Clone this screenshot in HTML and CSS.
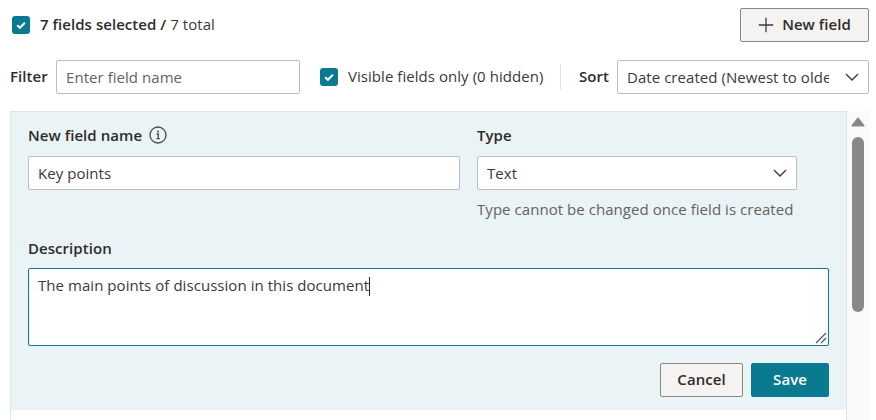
FILE: index.html
```html
<!DOCTYPE html>
<html lang="en">
<head>
<meta charset="utf-8">
<title>Fields</title>
<link rel="stylesheet" href="styles.css">
</head>
<body>
<div class="page">
  <div class="top-row">
    <label class="check-label">
      <span class="check"><svg viewBox="0 0 18 18" width="18" height="18"><path d="M5.2 9.2l2.7 2.6 5-5" fill="none" stroke="#fff" stroke-width="2"/></svg></span>
      <span><b class="strong">7 fields selected /</b> 7 total</span>
    </label>
    <button class="btn btn-new"><svg viewBox="0 0 16 16" width="16" height="16"><path d="M8 .8v14.4M.8 8h14.4" fill="none" stroke="#3c3a38" stroke-width="1.3"/></svg>New field</button>
  </div>
  <div class="filter-row">
    <span class="strong filter-label">Filter</span>
    <input class="field filter-input" placeholder="Enter field name">
    <label class="check-label visible-only">
      <span class="check"><svg viewBox="0 0 18 18" width="18" height="18"><path d="M5.2 9.2l2.7 2.6 5-5" fill="none" stroke="#fff" stroke-width="2"/></svg></span>
      <span>Visible fields only (0 hidden)</span>
    </label>
    <span class="divider"></span>
    <span class="strong sort-label">Sort</span>
    <div class="field select sort-select"><span class="select-text">Date created (Newest to oldest)</span><svg class="chev" viewBox="0 0 14 8" width="14" height="8"><path d="M1 1l6 6 6-6" fill="none" stroke="#3c3a38" stroke-width="1.4"/></svg></div>
  </div>
  <div class="list-area">
    <div class="panel">
      <div class="panel-form">
        <div class="grid-top">
          <div class="col-name">
            <div class="label strong">New field name <svg class="info" viewBox="0 0 18 18" width="18" height="18"><circle cx="9" cy="9" r="8" fill="none" stroke="#4a4a4a" stroke-width="1.3"/><path d="M7.6 8h1.7v4.4M7.4 12.6h3.4" fill="none" stroke="#4a4a4a" stroke-width="1.3"/><circle cx="9" cy="5.4" r="1" fill="#4a4a4a"/></svg></div>
            <input class="field" value="Key points">
          </div>
          <div class="col-type">
            <div class="label strong">Type</div>
            <div class="field select"><span class="select-text">Text</span><svg class="chev" viewBox="0 0 14 8" width="14" height="8"><path d="M1 1l6 6 6-6" fill="none" stroke="#3c3a38" stroke-width="1.4"/></svg></div>
            <div class="hint">Type cannot be changed once field is created</div>
          </div>
        </div>
        <div class="label strong desc-label">Description</div>
        <div class="area">The main points of discussion in this document<span class="caret"></span>
          <svg class="grip" viewBox="0 0 12 12" width="12" height="12"><path d="M1 11L11 1M6 11l5-5" fill="none" stroke="#555" stroke-width="1.2"/></svg>
        </div>
        <div class="actions">
          <button class="btn btn-cancel">Cancel</button>
          <button class="btn btn-save">Save</button>
        </div>
      </div>
    </div>
    <div class="scrollbar">
      <svg class="arrow" viewBox="0 0 14 10" width="14" height="10"><path d="M7 1.5L12.5 8.5H1.5Z" fill="#8a8886" stroke="#8a8886" stroke-width="2" stroke-linejoin="round"/></svg>
      <span class="thumb"></span>
    </div>
  </div>
</div>
</body>
</html>
```
FILE: styles.css
```css
* { box-sizing: border-box; }
html, body { margin: 0; height: 100%; overflow: hidden; background: #fff; }
body { font-family: "Open Sans", sans-serif; font-size: 15px; line-height: 20px; letter-spacing: .05px; color: #3c3a38; }
.page { width: 876px; height: 420px; padding: 8px 7px 0 10px; }
.strong { font-weight: 600; color: #2e2c2a; }
.top-row { display: flex; justify-content: space-between; align-items: center; height: 34px; padding-left: 2px; }
.check-label { display: flex; align-items: center; gap: 10px; white-space: nowrap; }
.check-label > span:last-child { position: relative; top: -1px; }
.check { width: 18px; height: 18px; border-radius: 3px; background: #0a7a91; display: block; flex: none; }
.check svg { display: block; }
.btn { font-family: inherit; font-size: 15px; font-weight: 600; letter-spacing: .05px; border-radius: 2px; height: 34px; padding: 0 0 2px; color: #2e2c2a; }
.btn-new { width: 129px; display: flex; align-items: center; justify-content: center; gap: 8px; background: #f4f3f1; border: 1px solid #8a8886; }
.btn-new svg { margin-top: 2px; }
.filter-row { display: flex; align-items: center; height: 34px; margin-top: 18px; }
.filter-label { width: 46px; margin-top: -2px; }
.field { font-family: inherit; font-size: 15px; letter-spacing: .05px; color: #3c3a38; height: 34px; border: 1px solid #bdbdbd; border-radius: 2px; background: #fff; padding: 0 9px; width: 100%; display: block; outline: none; }
.field::placeholder { color: #66625f; opacity: 1; }
.filter-input { width: 244px; flex: none; }
.visible-only { margin-left: 20px; width: 224px; flex: none; }
.divider { width: 1px; height: 26px; background: #e3e3e3; margin-left: 16px; flex: none; }
.sort-label { margin-left: 18px; width: 38px; margin-top: -2px; flex: none; }
.select { display: flex; align-items: center; justify-content: space-between; padding: 0 9px; }
.select-text { white-space: nowrap; overflow: hidden; flex: 1; min-width: 0; }
.sort-select { width: 252px; flex: none; }
.sort-select .select-text { margin-right: 16px; }
.chev { flex: none; }
.list-area { display: flex; height: 309px; margin-top: 17px; }
.panel { width: 837px; flex: none; background: #fff; border-left: 1px solid #e3e3e3; border-top: 1px solid #e3e3e3; border-right: 1px solid #e3e3e3; }
.panel-form { background: #eaf3f6; height: 298px; padding: 13px 17px 0 17px; }
.grid-top { display: flex; gap: 17px; }
.col-name { width: 432px; flex: none; }
.col-type { width: 320px; flex: none; }
.label { height: 20px; line-height: 20px; margin-bottom: 11px; display: flex; align-items: center; gap: 7px; }
.hint { margin-top: 9px; height: 20px; line-height: 20px; color: #66625f; }
.desc-label { margin-top: 19px; margin-bottom: 10px; }
.area { position: relative; width: 801px; height: 78px; background: #fff; border: 1px solid #0a7a91; border-radius: 2px; padding: 6px 9px; line-height: 20px; color: #3c3a38; }
.caret { display: inline-block; width: 1px; height: 19px; background: #222; vertical-align: -5px; }
.grip { position: absolute; right: 1px; bottom: 1px; }
.actions { display: flex; justify-content: flex-end; gap: 8px; margin-top: 17px; width: 801px; }
.btn-cancel { width: 83px; background: #f4f3f1; border: 1px solid #8a8886; }
.btn-save { width: 78px; background: #0a7a91; border: 1px solid #0a7a91; color: #fff; }
.scrollbar { width: 22px; flex: none; background: #fafafa; display: flex; flex-direction: column; align-items: center; padding-top: 6px; }
.arrow { display: block; flex: none; }
.thumb { width: 12px; height: 175px; margin-top: 10px; background: #8a8886; border-radius: 6px; }
```
